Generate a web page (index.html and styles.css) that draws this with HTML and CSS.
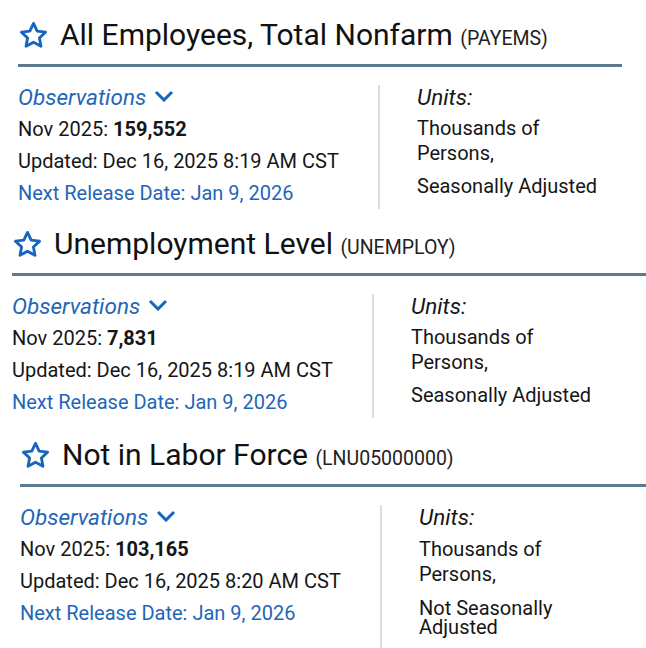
FILE: index.html
```html
<!DOCTYPE html>
<html lang="en">
<head>
<meta charset="utf-8">
<title>Series</title>
<link rel="stylesheet" href="styles.css">
</head>
<body>
<section class="series s1">
  <div class="head">
    <svg class="star" viewBox="0 0 24 24"><path d="M12 2.6l2.85 5.95 6.5.85-4.78 4.52 1.22 6.48L12 17.2l-5.79 3.2 1.22-6.48L2.65 9.4l6.5-.85z"/></svg>
    <h2 class="title">All Employees, Total Nonfarm <span class="code">(PAYEMS)</span></h2>
  </div>
  <div class="rule rule-short"></div>
  <div class="body">
    <div class="obs">
      <div class="obs-link">Observations <svg class="chev" viewBox="0 0 20 12"><polyline points="2,2 10,10 18,2"/></svg></div>
      <div class="line">Nov 2025: <b>159,552</b></div>
      <div class="line">Updated: Dec 16, 2025 8:19 AM CST</div>
      <div class="line link">Next Release Date: Jan 9, 2026</div>
    </div>
    <div class="units">
      <div class="units-label">Units:</div>
      <div class="units-val">Thousands of Persons,</div>
      <div class="units-adj">Seasonally Adjusted</div>
    </div>
  </div>
</section>

<section class="series s2">
  <div class="head">
    <svg class="star" viewBox="0 0 24 24"><path d="M12 2.6l2.85 5.95 6.5.85-4.78 4.52 1.22 6.48L12 17.2l-5.79 3.2 1.22-6.48L2.65 9.4l6.5-.85z"/></svg>
    <h2 class="title">Unemployment Level <span class="code">(UNEMPLOY)</span></h2>
  </div>
  <div class="rule"></div>
  <div class="body">
    <div class="obs">
      <div class="obs-link">Observations <svg class="chev" viewBox="0 0 20 12"><polyline points="2,2 10,10 18,2"/></svg></div>
      <div class="line">Nov 2025: <b>7,831</b></div>
      <div class="line">Updated: Dec 16, 2025 8:19 AM CST</div>
      <div class="line link">Next Release Date: Jan 9, 2026</div>
    </div>
    <div class="units">
      <div class="units-label">Units:</div>
      <div class="units-val">Thousands of Persons,</div>
      <div class="units-adj">Seasonally Adjusted</div>
    </div>
  </div>
</section>

<section class="series s3">
  <div class="head">
    <svg class="star" viewBox="0 0 24 24"><path d="M12 2.6l2.85 5.95 6.5.85-4.78 4.52 1.22 6.48L12 17.2l-5.79 3.2 1.22-6.48L2.65 9.4l6.5-.85z"/></svg>
    <h2 class="title">Not in Labor Force <span class="code">(LNU05000000)</span></h2>
  </div>
  <div class="rule"></div>
  <div class="body">
    <div class="obs">
      <div class="obs-link">Observations <svg class="chev" viewBox="0 0 20 12"><polyline points="2,2 10,10 18,2"/></svg></div>
      <div class="line">Nov 2025: <b>103,165</b></div>
      <div class="line">Updated: Dec 16, 2025 8:20 AM CST</div>
      <div class="line link">Next Release Date: Jan 9, 2026</div>
    </div>
    <div class="units units-tall">
      <div class="units-label">Units:</div>
      <div class="units-val">Thousands of Persons,</div>
      <div class="units-adj">Not Seasonally Adjusted</div>
    </div>
  </div>
</section>
</body>
</html>
```

FILE: styles.css
```css
html, body {
  margin: 0;
  padding: 0;
  background: #ffffff;
  overflow: hidden;
}

body {
  font-family: Roboto, "Liberation Sans", Arial, sans-serif;
  color: #161616;
  width: 646px;
}

.series {
  width: 646px;
}

.s1 { margin-left: 18px; }
.s2 { margin-left: 12px; }
.s3 { margin-left: 20px; margin-top: 2px; }

.head {
  display: flex;
  align-items: center;
  gap: 11px;
  padding-top: 17px;
}

.star {
  width: 31px;
  height: 31px;
  flex: none;
  fill: none;
  stroke: #1665bf;
  stroke-width: 2.2;
  stroke-linejoin: round;
}

.title {
  margin: 0;
  font-size: 30px;
  font-weight: 400;
  line-height: 36px;
  color: #111111;
  white-space: nowrap;
}

.code {
  font-size: 19.5px;
  line-height: 20px;
  color: #222222;
}

.rule {
  height: 3px;
  margin-top: 11px;
  background: #5a7a91;
}

.rule-short {
  width: 604px;
}

.body {
  display: flex;
  align-items: stretch;
  margin-top: 14px;
  font-size: 20px;
}

.obs {
  width: 360px;
  flex: none;
}

.obs-link,
.line {
  line-height: 32px;
  white-space: nowrap;
}

.obs-link {
  font-style: italic;
  font-size: 22.5px;
  color: #1f66b8;
}

.chev {
  width: 20px;
  height: 12px;
  margin-left: 2px;
  fill: none;
  stroke: #1665bf;
  stroke-width: 3;
  vertical-align: 3px;
}

.line b {
  font-weight: 700;
}

.link {
  color: #1f66b8;
}

.units {
  margin-top: 4px;
  border-left: 2px solid #d3e0e8;
  padding-left: 37px;
  width: 190px;
}

.units-label {
  font-style: italic;
  font-size: 22.5px;
  line-height: 24px;
}

.units-val {
  margin-top: 7px;
  line-height: 25px;
}

.units-adj {
  margin-top: 11px;
  line-height: 19px;
}

.units-tall {
  padding-bottom: 16px;
}

.units-tall .units-val {
  margin-top: 8px;
}

.units-tall .units-adj {
  margin-top: 12px;
}
```
